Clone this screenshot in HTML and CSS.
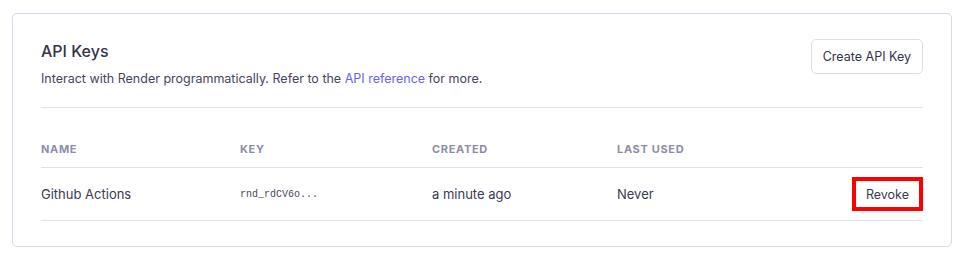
FILE: index.html
```html
<!DOCTYPE html>
<html lang="en">
    <head>
        <meta charset="UTF-8">
        <meta name="viewport" content="width=device-width, initial-scale=1">
        <title> API Keys </title>
        <link rel="stylesheet" href="styles.css">
    </head>
    <body>
        <section class="card">
            <div class="card-header">
                <div>
                    <h2 class="title">API Keys</h2>
                    <p class="subtitle">Interact with Render programmatically. Refer to the <a href="#">API reference</a> for more.</p>
                </div>
                <button class="btn" type="button">Create API Key</button>
            </div>
            <div class="keys">
                <div class="row head">
                    <div>Name</div>
                    <div>Key</div>
                    <div>Created</div>
                    <div>Last used</div>
                    <div></div>
                </div>
                <div class="row">
                    <div>Github Actions</div>
                    <div class="key">rnd_rdCV6o...</div>
                    <div>a minute ago</div>
                    <div>Never</div>
                    <div class="actions"><button class="revoke" type="button">Revoke</button></div>
                </div>
            </div>
        </section>
    </body>
</html>
```

FILE: styles.css
```css
body {
    margin: 0;
    padding: 13px 10px 0 12px;
    background-color: #fff;
    font-family: Inter, "Noto Sans", sans-serif;
    color: #363650;
}
.card {
    border: 1px solid #d5dce9;
    border-radius: 5px;
    padding: 25px 28px 25px 28px;
}
.card-header {
    display: flex;
    justify-content: space-between;
    align-items: flex-start;
    padding-bottom: 18px;
    border-bottom: 1px solid #dde3ee;
}
.title {
    margin: 0;
    font-size: 16px;
    line-height: 24px;
    font-weight: 500;
    color: #33334a;
}
.subtitle {
    margin: 6px 0 0 0;
    font-size: 12.5px;
    line-height: 20px;
    color: #45455e;
}
.subtitle a {
    color: #6a63f0;
    text-decoration: none;
}
.btn {
    height: 35px;
    padding: 0 11px;
    border: 1px solid #d8e0ee;
    border-radius: 5px;
    background: #fff;
    font-family: inherit;
    font-size: 12.5px;
    color: #33334a;
}
.row {
    display: grid;
    grid-template-columns: 199px 192px 185px 1fr auto;
    align-items: center;
    border-bottom: 1px solid #dde3ee;
    font-size: 13px;
    color: #3a3a52;
    height: 52px;
}
.row.head {
    height: auto;
    padding: 33px 0 10px 0;
    font-size: 11px;
    line-height: 16px;
    font-weight: 700;
    letter-spacing: 0.06em;
    text-transform: uppercase;
    color: #8d8cad;
}
.key {
    font-family: "Liberation Mono", monospace;
    font-size: 10px;
    color: #4a4a5c;
}
.actions {
    text-align: right;
}
.revoke {
    height: 34px;
    padding: 0 10px;
    border: 4px solid #f00;
    background: #fff;
    font-family: inherit;
    font-size: 12.5px;
    color: #3a3a52;
}
```
